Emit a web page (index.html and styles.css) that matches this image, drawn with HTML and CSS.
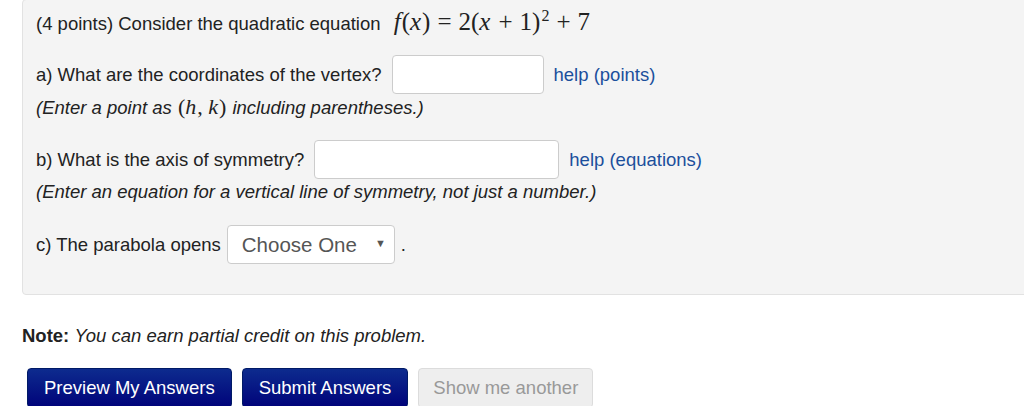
FILE: index.html
```html
<!DOCTYPE html>
<html lang="en">

<head>
  <meta charset="UTF-8">
  <title>Problem</title>
  <link rel="stylesheet" href="styles.css">
</head>

<body>
  <div class="problem">
    <div class="intro">
      (4 points) Consider the quadratic equation
      <span class="math big"><i>f</i>(<i>x</i>)<span class="op">=</span>2(<i>x</i><span class="op">+</span>1)<sup>2</sup><span class="op">+</span>7</span>
    </div>

    <div class="row first">
      <span>a) What are the coordinates of the vertex?</span>
      <input type="text" class="answer vertex">
      <a href="#" class="help">help (points)</a>
    </div>
    <div class="hint">(Enter a point as <span class="math">(<i>h</i>, <i>k</i>)</span> including parentheses.)</div>

    <div class="row">
      <span>b) What is the axis of symmetry?</span>
      <input type="text" class="answer axis">
      <a href="#" class="help">help (equations)</a>
    </div>
    <div class="hint">(Enter an equation for a vertical line of symmetry, not just a number.)</div>

    <div class="row">
      <span>c) The parabola opens</span>
      <div class="pick">
        <select class="choose">
          <option>Choose One</option>
          <option>Upward</option>
          <option>Downward</option>
        </select>
      </div>
      <span class="dot">.</span>
    </div>
  </div>

  <p class="note"><b>Note:</b> <i>You can earn partial credit on this problem.</i></p>

  <div class="buttons">
    <button class="btn primary">Preview My Answers</button>
    <button class="btn primary">Submit Answers</button>
    <button class="btn muted">Show me another</button>
  </div>
</body>

</html>
```

FILE: styles.css
```css
html {
  overflow: hidden;
}

body {
  margin: 0;
  padding-left: 22px;
  font-family: "Liberation Sans", Arial, sans-serif;
  font-size: 18.5px;
  color: #222;
  background: white;
}

.problem {
  margin-top: -1px;
  margin-right: -8px;
  padding: 9px 13px 30px 13px;
  background-color: #f4f4f4;
  border: 1px solid #e2e2e2;
  border-radius: 4px;
}

.intro {
  line-height: 26px;
  height: 26px;
}

.math {
  font-family: "Liberation Serif", "Times New Roman", serif;
  font-size: 22px;
  margin: 0 1px;
}

.math i {
  margin-right: 1px;
}

.math.big {
  font-size: 25px;
  margin-left: 8px;
}

.math .op {
  margin: 0 7px;
}

.math sup {
  font-size: 16px;
  line-height: 0;
  margin-left: 1px;
}

.row {
  display: flex;
  align-items: center;
  gap: 10px;
  height: 39px;
  margin-top: 20px;
}

.hint {
  font-style: italic;
  line-height: 26px;
  height: 26px;
}

.hint .math {
  font-style: normal;
}

.answer {
  height: 39px;
  box-sizing: border-box;
  border: 1px solid #ccc;
  border-radius: 4px;
  background: white;
  font-size: 18px;
  padding: 4px 8px;
}

.answer.vertex {
  width: 152px;
}

.answer.axis {
  width: 245px;
}

.help {
  color: #1b4f9c;
  text-decoration: none;
}

.pick {
  position: relative;
  margin-left: -4px;
}

.choose {
  appearance: none;
  width: 168px;
  height: 39px;
  box-sizing: border-box;
  padding: 0 14px;
  font-family: "Liberation Sans", Arial, sans-serif;
  font-size: 20.5px;
  color: #555;
  background: white;
  border: 1px solid #ccc;
  border-radius: 4px;
}

.pick::after {
  content: "\25BC";
  position: absolute;
  right: 9px;
  top: 12px;
  font-size: 11px;
  color: #555;
  pointer-events: none;
}

.dot {
  margin-left: -4px;
}

.note {
  margin: 28px 0 0 0;
  line-height: 26px;
}

.buttons {
  display: flex;
  gap: 10px;
  margin-top: 19px;
  margin-left: 5px;
}

.btn {
  height: 40px;
  padding: 0 16px;
  border-radius: 4px;
  font-family: "Liberation Sans", Arial, sans-serif;
  font-size: 18.5px;
  cursor: pointer;
}

.btn.primary {
  color: white;
  background: linear-gradient(#0d2b8e, #00037a);
  border: 1px solid #001a66;
}

.btn.muted {
  color: #999;
  background: #eeeeee;
  border: 1px solid #dcdcdc;
  padding: 0 14px;
}
```
